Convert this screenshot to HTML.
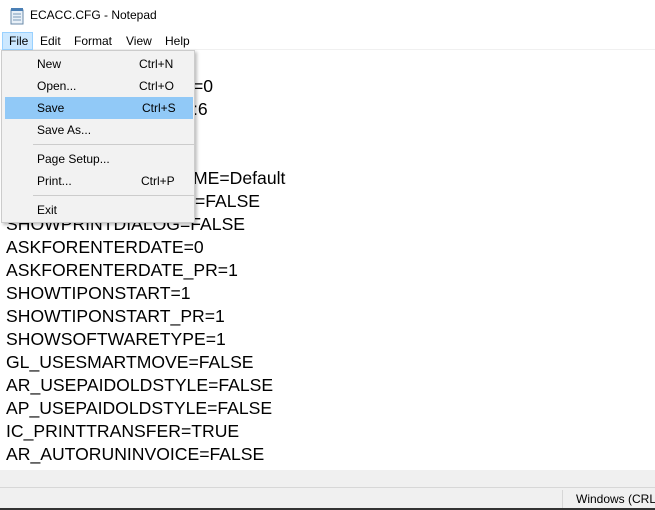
<!DOCTYPE html>
<html><head><meta charset="utf-8"><style>
*{margin:0;padding:0;box-sizing:border-box}
body{width:655px;height:510px;overflow:hidden;background:#fff;font-family:"Liberation Sans",sans-serif;position:relative}
.title{position:absolute;left:0;top:0;width:655px;height:32px;background:#fff}
.title span{position:absolute;left:30px;top:8px;font-size:12px;color:#000}
.menubar{position:absolute;left:0;top:32px;width:655px;height:18px;background:#fff;border-bottom:1px solid #f0f0f0}
.menubar span{position:absolute;top:2px;font-size:12px}
.filehl{position:absolute;left:2px;top:32px;width:31px;height:18px;background:#cce8ff;border:1px solid #99d1ff}
.text{position:absolute;left:6px;top:52px;font-size:17.6px;line-height:23px;color:#000;white-space:pre}
.text b{font-weight:normal;display:inline-block;width:187px;overflow:hidden;vertical-align:top}
.menu{position:absolute;left:1px;top:50px;width:194px;height:173px;background:#f2f2f2;border:1px solid #ccc;box-shadow:2px 2px 3px rgba(0,0,0,.25)}
.mi{position:absolute;left:35px;font-size:12px}
.sc{position:absolute;font-size:12px}
.hl{position:absolute;left:3px;top:46px;width:188px;height:22px;background:#91c9f7}
.sep{position:absolute;left:31px;width:161px;height:1px;background:#ccc}
.hs{position:absolute;left:0;top:470px;width:655px;height:17px;background:#f0f0f0}
.status{position:absolute;left:0;top:487px;width:655px;height:23px;background:#f0f0f0;border-top:1px solid #d7d7d7;border-bottom:2px solid #333;overflow:hidden}
.status span{position:absolute;left:576px;top:4px;font-size:12px;white-space:nowrap}
.status i{position:absolute;left:562px;top:2px;width:1px;height:18px;background:#d7d7d7}
</style></head><body>
<div class="title">
<svg style="position:absolute;left:9px;top:8px" width="16" height="17" viewBox="0 0 16 17"><rect x="2" y="2" width="12" height="14" fill="#e8f0f8" stroke="#6a8aa8"/><g stroke="#7a9ab8"><line x1="4" y1="6" x2="12" y2="6"/><line x1="4" y1="9" x2="12" y2="9"/><line x1="4" y1="12" x2="12" y2="12"/></g><rect x="2" y="0" width="12" height="3" fill="#4a7fb5"/></svg>
<span>ECACC.CFG - Notepad</span></div>
<div class="menubar"><span style="left:9px">File</span><span style="left:40px">Edit</span><span style="left:74px">Format</span><span style="left:126px">View</span><span style="left:165px">Help</span></div>
<div class="filehl"></div>
<div class="menubar" style="background:none;border:none"><span style="left:9px">File</span></div>
<div class="text">[ECACC]
<b>SHOWCHECKBAL</b>=0
<b>DECIMALS</b>:6

<b>SHOWTOOLBAR</b>
<b>TOOLBARTHE</b>ME=Default
<b>SHOWLASTUSED</b><span style="margin-left:2px">=FALSE</span>
SHOWPRINTDIALOG=FALSE
ASKFORENTERDATE=0
ASKFORENTERDATE_PR=1
SHOWTIPONSTART=1
SHOWTIPONSTART_PR=1
SHOWSOFTWARETYPE=1
GL_USESMARTMOVE=FALSE
AR_USEPAIDOLDSTYLE=FALSE
AP_USEPAIDOLDSTYLE=FALSE
IC_PRINTTRANSFER=TRUE
AR_AUTORUNINVOICE=FALSE</div>
<div class="menu">
<div class="hl"></div>
<span class="mi" style="top:6px">New</span><span class="sc" style="left:137px;top:6px">Ctrl+N</span>
<span class="mi" style="top:28px">Open...</span><span class="sc" style="left:137px;top:28px">Ctrl+O</span>
<span class="mi" style="top:50px">Save</span><span class="sc" style="left:140px;top:50px">Ctrl+S</span>
<span class="mi" style="top:72px">Save As...</span>
<div class="sep" style="top:93px"></div>
<span class="mi" style="top:101px">Page Setup...</span>
<span class="mi" style="top:123px">Print...</span><span class="sc" style="left:139px;top:123px">Ctrl+P</span>
<div class="sep" style="top:144px"></div>
<span class="mi" style="top:152px">Exit</span>
</div>
<div class="hs"></div>
<div class="status"><i></i><span>Windows (CRLF)</span></div>
</body></html>
